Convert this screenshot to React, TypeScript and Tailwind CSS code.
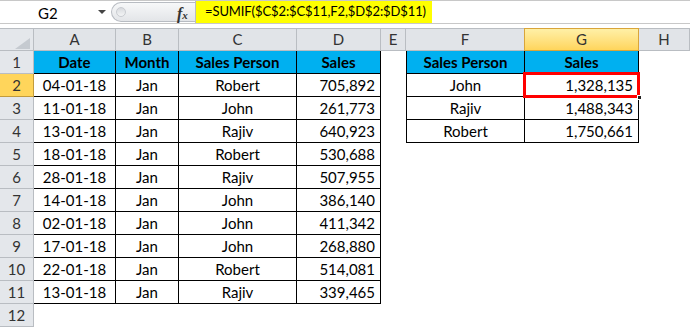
import React from "react";

const cols = ["A", "B", "C", "D", "E", "F", "G", "H"];

const data: [string, string, string, string][] = [
  ["04-01-18", "Jan", "Robert", "705,892"],
  ["11-01-18", "Jan", "John", "261,773"],
  ["13-01-18", "Jan", "Rajiv", "640,923"],
  ["18-01-18", "Jan", "Robert", "530,688"],
  ["28-01-18", "Jan", "Rajiv", "507,955"],
  ["14-01-18", "Jan", "John", "386,140"],
  ["02-01-18", "Jan", "John", "411,342"],
  ["17-01-18", "Jan", "John", "268,880"],
  ["22-01-18", "Jan", "Robert", "514,081"],
  ["13-01-18", "Jan", "Rajiv", "339,465"],
];

const summary: [string, string][] = [
  ["John", "1,328,135"],
  ["Rajiv", "1,488,343"],
  ["Robert", "1,750,661"],
];

const font = { fontFamily: "Lato, 'Open Sans', sans-serif" };

function RowCells({ r }: { r: number }) {
  const isHeader = r === 1;
  const d = r >= 2 && r <= 11 ? data[r - 2] : null;
  const s = r >= 2 && r <= 4 ? summary[r - 2] : null;
  const inLeft = r <= 11;
  const inRight = r <= 4;

  const hdrCls =
    "bg-[#00b0f0] font-bold border-r border-b border-black flex items-center justify-center pt-[1px]";
  const cCls = "bg-white border-r border-b border-black flex items-center justify-center pt-[1px]";
  const rCls = "bg-white border-r border-b border-black flex items-center justify-end pr-[5px] pt-[1px]";
  const blank = "bg-white";

  return (
    <>
      <div
        className={
          r === 2
            ? "bg-[#ffd55b] border-r border-b border-[#c29b3c] flex items-center justify-center text-[#333] pt-[1px]"
            : "bg-[#e4e7eb] border-r border-b border-[#b9bdc2] flex items-center justify-center text-[#333] pt-[1px]"
        }
      >
        {r}
      </div>
      {inLeft ? (
        isHeader ? (
          <>
            <div className={hdrCls}>Date</div>
            <div className={hdrCls}>Month</div>
            <div className={hdrCls}>Sales Person</div>
            <div className={hdrCls}>Sales</div>
          </>
        ) : (
          <>
            <div className={cCls}>{d![0]}</div>
            <div className={cCls}>{d![1]}</div>
            <div className={cCls}>{d![2]}</div>
            <div className={rCls}>{d![3]}</div>
          </>
        )
      ) : (
        <>
          <div className={blank} />
          <div className={blank} />
          <div className={blank} />
          <div className={blank} />
        </>
      )}
      <div className={blank} />
      {inRight ? (
        isHeader ? (
          <>
            <div className={hdrCls + " border-l"}>Sales Person</div>
            <div className={hdrCls}>Sales</div>
          </>
        ) : (
          <>
            <div className={cCls + " border-l"}>{s![0]}</div>
            <div className={rCls}>{s![1]}</div>
          </>
        )
      ) : (
        <>
          <div className={blank} />
          <div className={blank} />
        </>
      )}
      <div className={blank} />
    </>
  );
}

export default function App() {
  return (
    <div className="w-[690px] h-[327px] overflow-hidden bg-white text-[15px] text-black relative" style={font}>
      {/* Formula bar */}
      <div className="h-[28px] bg-white">
        <div className="h-[24px] flex border-t border-b border-[#c8c8c8]">
          <div className="w-[108px] flex items-center relative">
            <span className="absolute left-[38px] top-[1px] text-[15px] text-black">G2</span>
            <span className="absolute left-[98px] top-[9px] w-0 h-0 border-l-[4px] border-r-[4px] border-t-[4px] border-l-transparent border-r-transparent border-t-[#444]" />
          </div>
          <div className="w-[87px] relative flex items-center">
            <div className="absolute left-[3px] top-[1px] h-[20px] w-[84px] rounded-l-full border-l border-t border-b border-[#b8bcc2] bg-gradient-to-b from-[#f7f8f9] to-[#e3e5e8]">
              <div className="absolute left-[4px] top-[4px] w-[10px] h-[10px] rounded-full bg-gradient-to-b from-[#d8dade] to-[#f4f5f6] border border-[#c9ccd1]" />
            </div>
            <span
              className="absolute left-[69px] top-[1px] italic font-bold text-[#333] text-[16px]"
              style={{ fontFamily: "'Liberation Serif', serif" }}
            >
              f<span className="text-[11px]">x</span>
            </span>
          </div>
          <div className="w-[237px] bg-[#ffff00] border-l border-[#b8bcc2] flex items-center pl-[9px] text-[13px] tracking-[-0.1px] text-black whitespace-nowrap overflow-hidden">
            =SUMIF($C$2:$C$11,F2,$D$2:$D$11)
          </div>
          <div className="flex-1 bg-white" />
        </div>
      </div>

      {/* Sheet grid */}
      <div className="grid grid-cols-[34px_82px_63px_118px_84px_25px_119px_114px_51px] grid-rows-[23px_repeat(12,23px)]">
        <div className="bg-[#e4e7eb] border-t border-r border-b border-[#b9bdc2] relative">
          <svg className="absolute left-[15px] top-[9px]" width="15" height="11" viewBox="0 0 15 11">
            <polygon points="15,0 15,11 0,11" fill="#c5cad0" />
          </svg>
        </div>
        {cols.map((c) =>
          c === "G" ? (
            <div
              key={c}
              className="bg-gradient-to-b from-[#fff0a6] to-[#ffd55b] border-t border-r border-b border-l border-[#d9a53a] flex items-center justify-center text-[#333] -ml-[1px]"
            >
              {c}
            </div>
          ) : (
            <div
              key={c}
              className="bg-[#e1e4e8] border-t border-r border-b border-[#b9bdc2] flex items-center justify-center text-[#333]"
            >
              {c}
            </div>
          )
        )}
        {Array.from({ length: 12 }, (_, i) => (
          <RowCells key={i} r={i + 1} />
        ))}
      </div>

      {/* Selection */}
      <div className="absolute left-[523px] top-[72px] w-[117px] h-[26px] border-[3px] border-[#ff0000] pointer-events-none" />
      <div className="absolute left-[637px] top-[95px] w-[5px] h-[5px] bg-[#222] border border-white pointer-events-none" />
    </div>
  );
}
